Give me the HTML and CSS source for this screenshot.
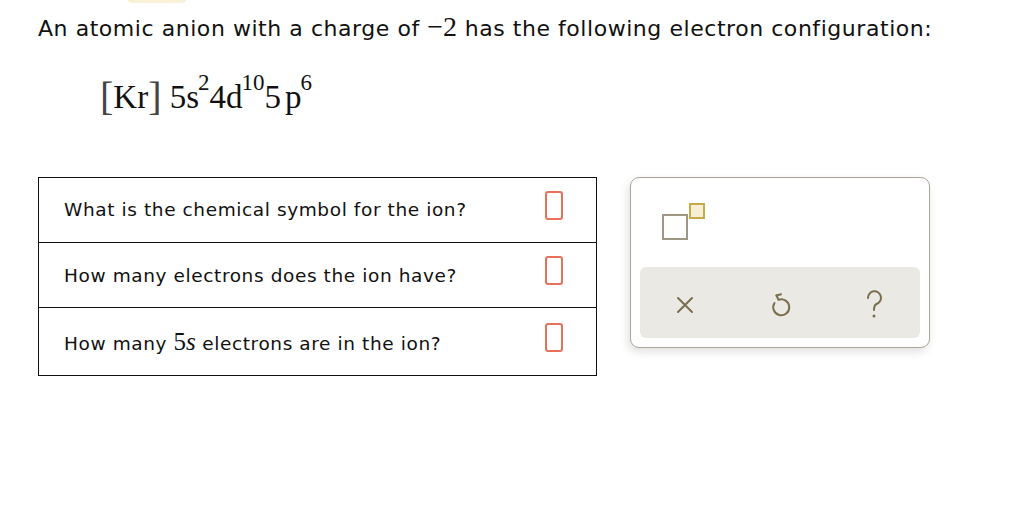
FILE: index.html
```html
<!DOCTYPE html>
<html>
<head>
<meta charset="utf-8">
<link rel="stylesheet" href="styles.css">
</head>
<body>
<div class="tab"></div>
<div class="page">
  <p class="intro">An atomic anion with a charge of <span class="math">−2</span> has the following electron configuration:</p>
  <div class="formula"><span class="br">[</span>Kr<span class="br">]</span> 5s<sup>2</sup>4d<sup>10</sup>5<span class="sp"></span>p<sup>6</sup></div>
  <div class="main">
    <div class="qtable">
      <div class="qrow r1"><span class="qtext">What is the chemical symbol for the ion?</span><span class="inbox"></span></div>
      <div class="qrow r2"><span class="qtext">How many electrons does the ion have?</span><span class="inbox"></span></div>
      <div class="qrow r3"><span class="qtext">How many <span class="m5">5<i>s</i></span> electrons are in the ion?</span><span class="inbox"></span></div>
    </div>
    <div class="panel">
      <div class="tools">
        <svg class="supicon" width="46" height="40" viewBox="0 0 46 40">
          <rect x="1" y="12" width="24" height="24" fill="#fff" stroke="#9d9784" stroke-width="2"/>
          <rect x="28" y="1" width="14" height="14" fill="#f6efd6" stroke="#c8a947" stroke-width="2"/>
        </svg>
      </div>
      <div class="bar">
        <svg class="ic" width="20" height="20" viewBox="0 0 20 20"><path d="M3 3 L17 17 M17 3 L3 17" stroke="#7a6e50" stroke-width="2" fill="none" stroke-linecap="round"/></svg>
        <svg class="ic" width="24" height="26" viewBox="0 0 24 26"><path d="M6.5 11 A8 8 0 1 0 10.5 7.8 L8.5 3.5" stroke="#7a6e50" stroke-width="2" fill="none" stroke-linecap="round" stroke-linejoin="round"/><path d="M8.5 3.5 L13 2.2" stroke="#7a6e50" stroke-width="2" fill="none" stroke-linecap="round"/></svg>
        <svg class="ic" width="20" height="30" viewBox="0 0 20 30"><path d="M4 8 A6.5 6.5 0 1 1 12.5 14 C10.5 15 10 16.5 10 20" stroke="#7a6e50" stroke-width="2" fill="none" stroke-linecap="round"/><circle cx="10" cy="26" r="1.5" fill="#7a6e50"/></svg>
      </div>
    </div>
  </div>
</div>
</body>
</html>
```
FILE: styles.css
```css
* { box-sizing: border-box; }
body {
  margin: 0;
  background: #fff;
  font-family: "DejaVu Sans", Verdana, sans-serif;
  color: #111;
  width: 1024px;
  height: 532px;
  overflow: hidden;
  position: relative;
}
.tab {
  position: absolute;
  left: 127px;
  top: -8px;
  width: 60px;
  height: 11px;
  background: #f8f1d8;
  border-radius: 6px;
}
.page {
  padding: 12px 0 0 38px;
}
.intro {
  margin: 0;
  font-size: 22px;
  line-height: 30px;
  letter-spacing: 0.55px;
}
.math {
  font-family: "Liberation Serif", "Times New Roman", serif;
  font-size: 28px;
  letter-spacing: 0;
}
.formula {
  margin: 29px 0 0 62px;
  font-family: "Liberation Serif", "Times New Roman", serif;
  font-size: 33px;
  line-height: 48px;
  height: 48px;
}
.formula .br {
  font-size: 40px;
  color: #444;
  vertical-align: -2px;
}
.formula sup {
  font-size: 23px;
  vertical-align: 18px;
  line-height: 0;
  margin-left: -1px;
}
.formula .sp { display: inline-block; width: 4px; }
.main {
  display: flex;
  margin-top: 56px;
  align-items: flex-start;
}
.qtable {
  width: 559px;
  border: 1.5px solid #111;
}
.qrow {
  display: flex;
  align-items: center;
  justify-content: space-between;
  padding: 0 33px 0 25px;
  font-size: 18.5px;
  letter-spacing: 0.6px;
}
.r1 { height: 65px; border-bottom: 1.5px solid #111; }
.r2 { height: 65px; border-bottom: 1.5px solid #111; }
.r3 { height: 67px; }
.r1 .qtext { margin-top: -1px; }
.m5 {
  font-family: "Liberation Serif", "Times New Roman", serif;
  font-size: 25px;
  letter-spacing: 0;
}
.m5 i { font-style: italic; }
.inbox {
  width: 18px;
  height: 29px;
  border: 2px solid #e8705c;
  border-radius: 3px;
  margin-bottom: 9px;
}
.panel {
  margin-left: 33px;
  width: 300px;
  height: 171px;
  border: 1.5px solid #aaa596;
  border-radius: 9px;
  box-shadow: -2px 4px 10px rgba(0,0,0,0.12);
  padding: 0 9px 9px 9px;
  display: flex;
  flex-direction: column;
}
.tools {
  height: 89px;
  padding: 25px 0 0 22px;
}
.supicon { display: block; }
.bar {
  flex: 1;
  background: #ebe9e4;
  border-radius: 6px;
  display: flex;
  align-items: center;
  justify-content: space-between;
  padding: 4px 36px 0 35px;
}
.ic { display: block; }
```
